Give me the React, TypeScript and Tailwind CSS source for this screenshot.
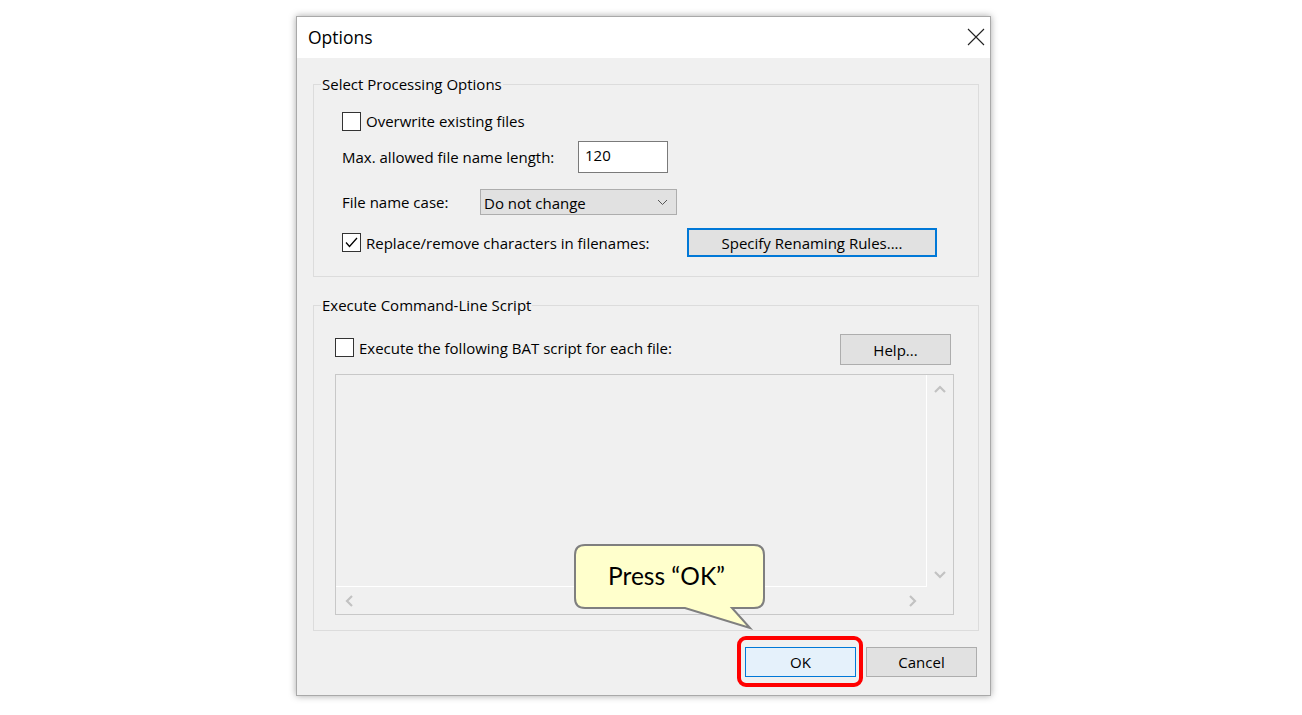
import React from "react";

const font = { fontFamily: '"Open Sans", "Noto Sans", Arial, sans-serif' };

function Check({ checked }: { checked?: boolean }) {
  return (
    <span className="w-[19px] h-[19px] border border-[#333333] bg-white flex items-center justify-center shrink-0">
      {checked && (
        <svg width="13" height="11" viewBox="0 0 13 11">
          <path d="M1 5.5 L4.5 9.5 L12 1" fill="none" stroke="#000" strokeWidth="1.3" />
        </svg>
      )}
    </span>
  );
}

function Chevron({ dir }: { dir: "up" | "down" | "left" | "right" }) {
  const d = {
    up: "M1 7 L6 2 L11 7",
    down: "M1 2 L6 7 L11 2",
    left: "M7 1 L2 6 L7 11",
    right: "M2 1 L7 6 L2 11",
  }[dir];
  const vertical = dir === "up" || dir === "down";
  return (
    <svg width={vertical ? 12 : 9} height={vertical ? 9 : 12} viewBox={vertical ? "0 0 12 9" : "0 0 9 12"}>
      <path d={d} fill="none" stroke="#c2c2c2" strokeWidth="2.2" />
    </svg>
  );
}

export default function App() {
  return (
    <div className="w-[1302px] h-[715px] bg-white relative overflow-hidden" style={font}>
      <div className="absolute left-[296px] top-[16px] w-[695px] h-[680px] border border-[#a9a9a9] bg-[#f0f0f0] shadow-[0_0_7px_rgba(0,0,0,0.35)] flex flex-col text-[15px] leading-[20px] text-black">
        {/* Title bar */}
        <div className="h-[41px] bg-white flex items-center justify-between pl-[11px] pb-[2px] shrink-0">
          <span className="text-[17.5px]">Options</span>
          <svg width="28" height="28" viewBox="0 0 28 28">
            <path d="M6 6 L22 22 M22 6 L6 22" stroke="#222" strokeWidth="1.1" />
          </svg>
        </div>

        {/* Group 1 */}
        <fieldset className="ml-[16px] mt-[16px] w-[666px] h-[203px] border border-[#dcdcdc]">
          <legend className="ml-[7px] px-[1px] leading-[20px]">Select Processing Options</legend>
          <div className="flex flex-col pl-[28px] pr-[12px]">
            <div className="mt-[17px] h-[20px] flex items-center gap-[5px]">
              <Check />
              <span>Overwrite existing files</span>
            </div>
            <div className="mt-[10px] h-[32px] flex items-center">
              <span className="w-[236px]">Max. allowed file name length:</span>
              <div className="w-[90px] h-[32px] bg-white border border-[#7a7a7a] pl-[6px] pt-[3px]">120</div>
            </div>
            <div className="mt-[16px] h-[26px] flex items-center">
              <span className="w-[138px]">File name case:</span>
              <div className="w-[197px] h-[26px] bg-[#e1e1e1] border border-[#adadad] flex items-center justify-between pl-[3px] pr-[8px]">
                <span className="pt-[2px]">Do not change</span>
                <svg width="11" height="7" viewBox="0 0 11 7">
                  <path d="M1 1 L5.5 5.5 L10 1" fill="none" stroke="#555" strokeWidth="1" />
                </svg>
              </div>
            </div>
            <div className="mt-[13px] h-[29px] flex items-center">
              <div className="w-[345px] flex items-center gap-[5px]">
                <Check checked />
                <span>Replace/remove characters in filenames:</span>
              </div>
              <div className="w-[250px] h-[29px] bg-[#e1e1e1] border-2 border-[#0078d7] flex items-center justify-center">
                Specify Renaming Rules....
              </div>
            </div>
          </div>
        </fieldset>

        {/* Group 2 */}
        <fieldset className="ml-[16px] mt-[18px] w-[666px] h-[336px] border border-[#dcdcdc]">
          <legend className="ml-[7px] px-[1px] leading-[20px]">Execute Command-Line Script</legend>
          <div className="pl-[21px] pr-[24px]">
            <div className="mt-[19px] h-[31px] flex items-center justify-between pr-[3px]">
              <div className="flex items-center gap-[5px] mb-[4px]">
                <Check />
                <span>Execute the following BAT script for each file:</span>
              </div>
              <div className="w-[111px] h-[31px] bg-[#e1e1e1] border border-[#adadad] flex items-center justify-center">
                Help...
              </div>
            </div>
            <div className="mt-[9px] w-[619px] h-[241px] border border-[#c8c8c8] flex flex-col">
              <div className="flex-1 flex">
                <div className="flex-1 border-r border-b border-white" />
                <div className="w-[26px] flex flex-col items-center justify-between pt-[10px] pb-[8px]">
                  <Chevron dir="up" />
                  <Chevron dir="down" />
                </div>
              </div>
              <div className="h-[27px] flex items-center">
                <div className="w-[591px] flex items-center justify-between pl-[9px] pr-[10px]">
                  <Chevron dir="left" />
                  <Chevron dir="right" />
                </div>
              </div>
            </div>
          </div>
        </fieldset>

        {/* Footer buttons */}
        <div className="mt-[16px] flex justify-end gap-[10px] pr-[13px]">
          <div className="relative">
            <div className="w-[111px] h-[30px] bg-[#e5f1fb] border border-[#0078d7] flex items-center justify-center">
              OK
            </div>
            <div className="absolute left-[-8px] top-[-11px] w-[126px] h-[51px] border-4 border-[#ff0000] rounded-[9px]" />
          </div>
          <div className="w-[111px] h-[30px] bg-[#e1e1e1] border border-[#adadad] flex items-center justify-center">
            Cancel
          </div>
        </div>
      </div>

      {/* Callout */}
      <div className="absolute left-[574px] top-[544px] w-[191px] h-[65px]">
        <svg className="absolute left-0 top-0" width="191" height="90" viewBox="0 0 191 90">
          <path
            d="M11 1 H180 Q190 1 190 11 V54 Q190 64 180 64 H158 L176 84 L111 64 H11 Q1 64 1 54 V11 Q1 1 11 1 Z"
            fill="#ffffcc"
            stroke="#7f7f7f"
            strokeWidth="2"
          />
        </svg>
        <div className="relative h-[65px] flex items-center pl-[34px] text-[24.5px]" style={{ fontFamily: "Lato, sans-serif" }}>
          Press “OK”
        </div>
      </div>
    </div>
  );
}
